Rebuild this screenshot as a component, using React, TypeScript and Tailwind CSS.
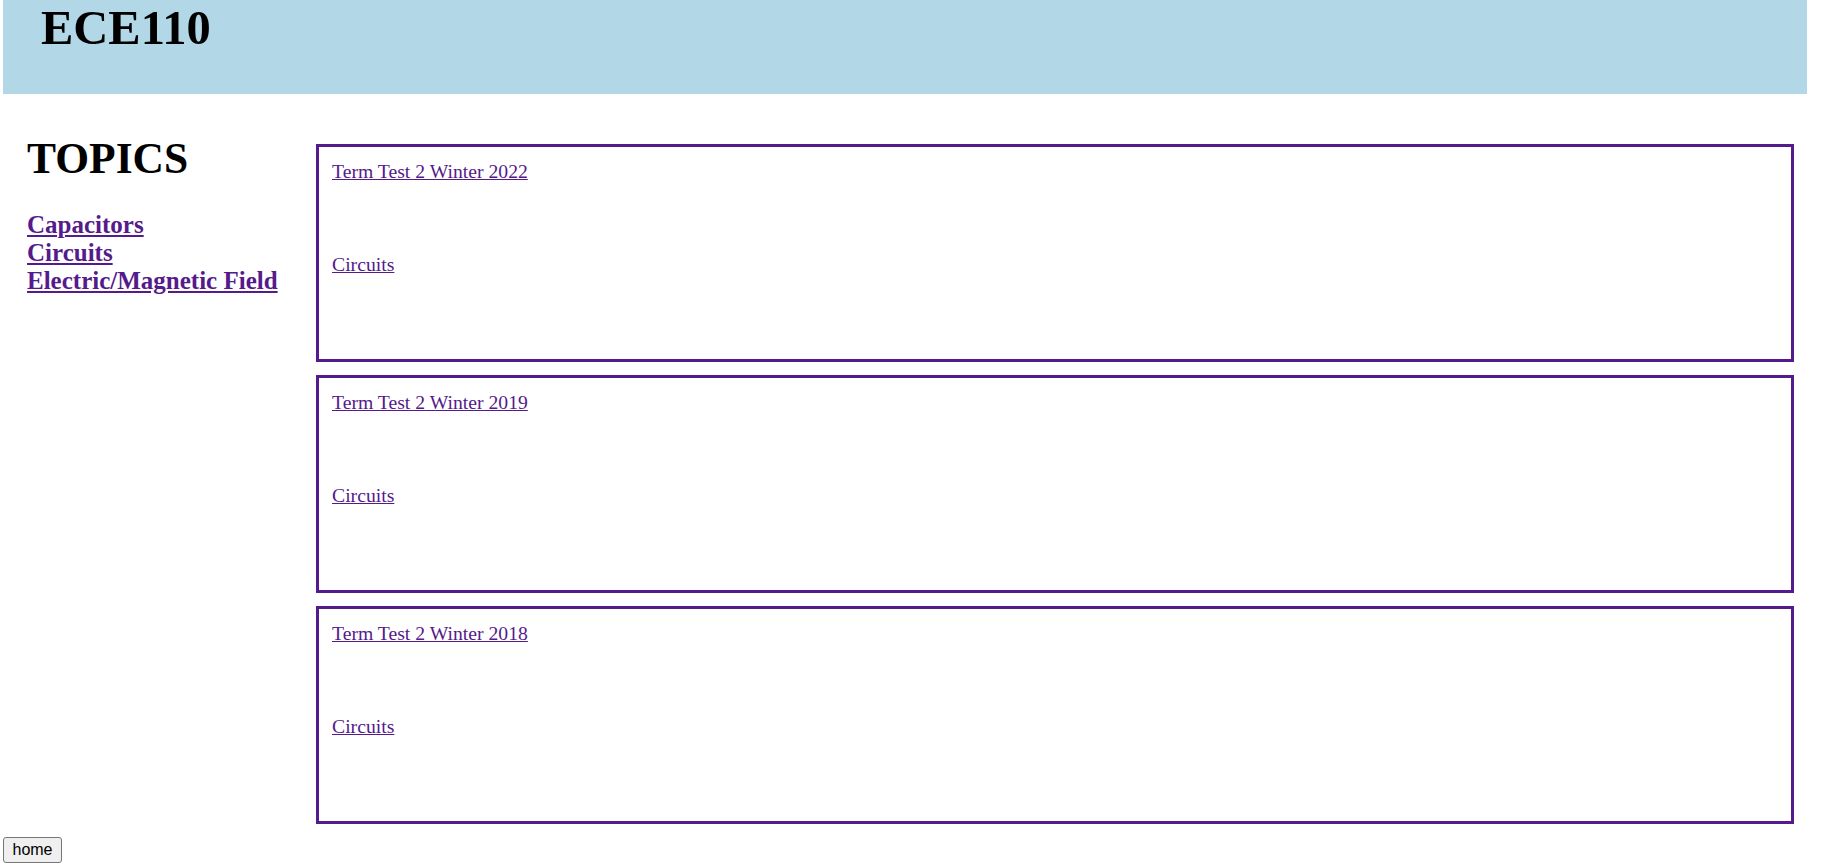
const exams = [
  { title: "Term Test 2 Winter 2022", topics: ["Circuits"] },
  { title: "Term Test 2 Winter 2019", topics: ["Circuits"] },
  { title: "Term Test 2 Winter 2018", topics: ["Circuits"] },
];

const topics = ["Capacitors", "Circuits", "Electric/Magnetic Field"];

export default function App() {
  return (
    <div className="min-h-screen bg-white text-black font-['Liberation_Serif','Times_New_Roman',serif]">
      <header className="ml-[3px] mr-[14px] h-[94px] bg-[#b2d7e6]">
        <h1 className="pl-[38px] text-[48.5px] font-bold leading-[normal]">ECE110</h1>
      </header>

      <div className="flex">
        <aside className="w-[316px] shrink-0 pl-[27px]">
          <h2 className="mt-[39px] text-[43.5px] font-bold leading-[normal]">TOPICS</h2>
          <ul className="mt-[28px]">
            {topics.map((t) => (
              <li key={t} className="leading-[normal]">
                <a href="#" className="text-[25px] font-bold leading-[normal] text-[#551a8b] underline">
                  {t}
                </a>
              </li>
            ))}
          </ul>
        </aside>

        <main className="mt-[50px] flex w-[1478px] flex-col gap-[13px]">
          {exams.map((exam) => (
            <div
              key={exam.title}
              className="h-[218px] border-[3px] border-[#551a8b] px-[13px] pt-[13px] text-[19.7px] leading-[normal]"
            >
              <a href="#" className="text-[#551a8b] underline">
                {exam.title}
              </a>
              {exam.topics.map((t) => (
                <div key={t} className="mt-[70px]">
                  <a href="#" className="text-[#551a8b] underline">
                    {t}
                  </a>
                </div>
              ))}
            </div>
          ))}
        </main>
      </div>

      <button className="ml-[3px] mt-[13px] h-[26px] w-[59px] rounded-[3px] border border-[#767676] bg-[#efefef] font-['Liberation_Sans',Arial,sans-serif] text-[16px] leading-[normal] text-black">
        home
      </button>
    </div>
  );
}
